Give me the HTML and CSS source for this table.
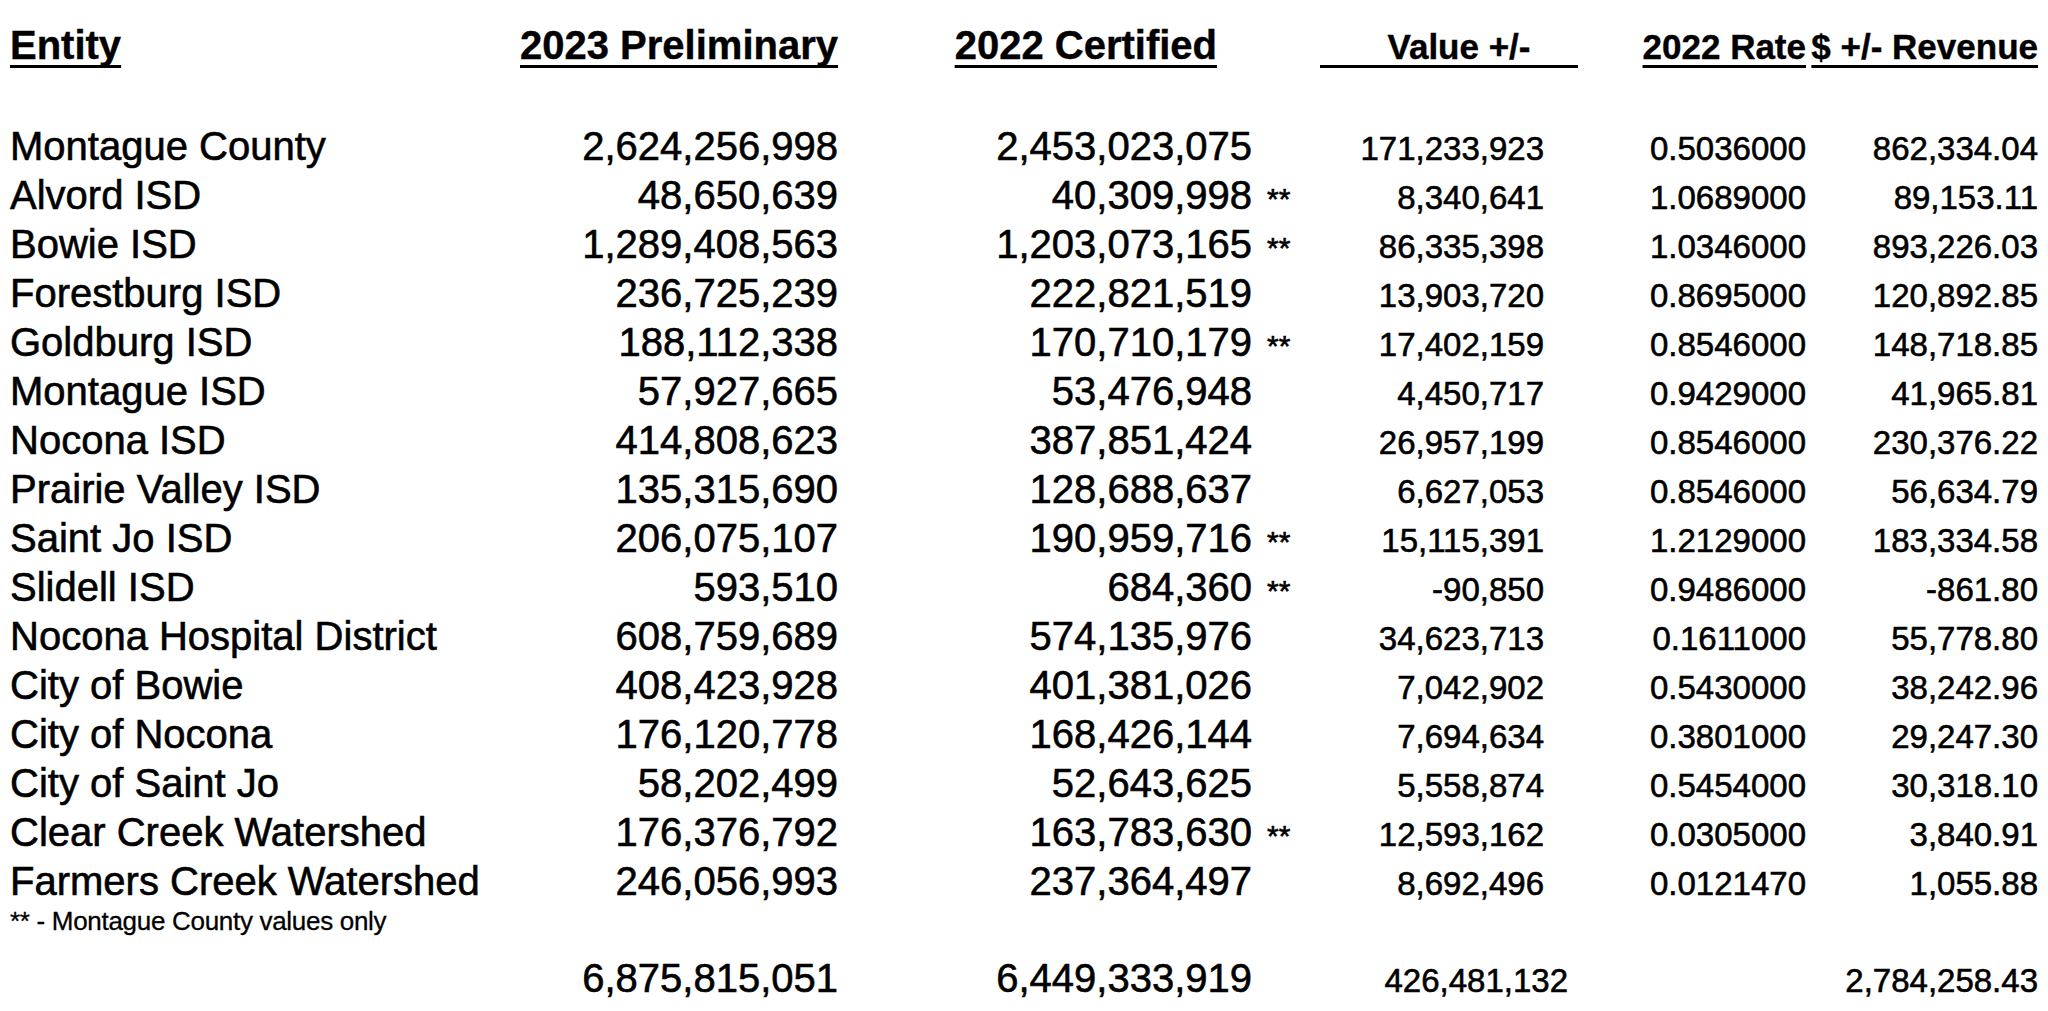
FILE: index.html
```html
<!DOCTYPE html>
<html lang="en">
<head>
    <meta charset="UTF-8">
    <title>Montague County Values</title>
    <link rel="stylesheet" href="styles.css">
</head>
<body>

<div class="sheet">
    <div class="row head">
        <div><span class="ul">Entity</span></div>
        <div class="num pad-pre"><span class="ul">2023 Preliminary</span></div>
        <div class="num pad-cert"><span class="ul">2022 Certified</span></div>
        <div></div>
        <div class="value-head"><span class="ul-box">Value +/-</span></div>
        <div class="num small"><span class="ul">2022 Rate</span></div>
        <div class="num small"><span class="ul">$ +/- Revenue</span></div>
    </div>

    <div class="rows" id="rows"></div>

    <div class="note">** - Montague County values only</div>

    <div class="row total">
        <div></div>
        <div class="num">6,875,815,051</div>
        <div class="num">6,449,333,919</div>
        <div></div>
        <div class="num small shift">426,481,132</div>
        <div class="num small"></div>
        <div class="num small">2,784,258.43</div>
    </div>
</div>

<script>
    // entity, 2023 preliminary, 2022 certified, county only, value +/-, rate, revenue
    const data = [
        ['Montague County', '2,624,256,998', '2,453,023,075', false, '171,233,923', '0.5036000', '862,334.04'],
        ['Alvord ISD', '48,650,639', '40,309,998', true, '8,340,641', '1.0689000', '89,153.11'],
        ['Bowie ISD', '1,289,408,563', '1,203,073,165', true, '86,335,398', '1.0346000', '893,226.03'],
        ['Forestburg ISD', '236,725,239', '222,821,519', false, '13,903,720', '0.8695000', '120,892.85'],
        ['Goldburg ISD', '188,112,338', '170,710,179', true, '17,402,159', '0.8546000', '148,718.85'],
        ['Montague ISD', '57,927,665', '53,476,948', false, '4,450,717', '0.9429000', '41,965.81'],
        ['Nocona ISD', '414,808,623', '387,851,424', false, '26,957,199', '0.8546000', '230,376.22'],
        ['Prairie Valley ISD', '135,315,690', '128,688,637', false, '6,627,053', '0.8546000', '56,634.79'],
        ['Saint Jo ISD', '206,075,107', '190,959,716', true, '15,115,391', '1.2129000', '183,334.58'],
        ['Slidell ISD', '593,510', '684,360', true, '-90,850', '0.9486000', '-861.80'],
        ['Nocona Hospital District', '608,759,689', '574,135,976', false, '34,623,713', '0.1611000', '55,778.80'],
        ['City of Bowie', '408,423,928', '401,381,026', false, '7,042,902', '0.5430000', '38,242.96'],
        ['City of Nocona', '176,120,778', '168,426,144', false, '7,694,634', '0.3801000', '29,247.30'],
        ['City of Saint Jo', '58,202,499', '52,643,625', false, '5,558,874', '0.5454000', '30,318.10'],
        ['Clear Creek Watershed', '176,376,792', '163,783,630', true, '12,593,162', '0.0305000', '3,840.91'],
        ['Farmers Creek Watershed', '246,056,993', '237,364,497', false, '8,692,496', '0.0121470', '1,055.88']
    ];

    const rows = document.getElementById('rows');

    data.forEach(d => {
        const row = document.createElement('div');
        row.className = 'row';
        row.innerHTML = `
            <div>${d[0]}</div>
            <div class="num">${d[1]}</div>
            <div class="num">${d[2]}</div>
            <div class="star">${d[3] ? '**' : ''}</div>
            <div class="num small">${d[4]}</div>
            <div class="num small">${d[5]}</div>
            <div class="num small">${d[6]}</div>
        `;
        rows.appendChild(row);
    });
</script>

</body>
</html>
```

FILE: styles.css
```css
body {
    margin: 0;
    background-color: #fff;
    color: #000;
    font-family: "Liberation Sans", Arial, sans-serif;
}
.sheet {
    padding: 21px 11px 0 10px;
}
.row {
    display: grid;
    grid-template-columns: 510px 318px 414px 68px 224px 262px 232px;
    align-items: baseline;
    height: 49px;
    font-size: 40px;
    line-height: 49px;
    white-space: nowrap;
    -webkit-text-stroke: 0.6px #000;
}
.num {
    text-align: right;
}
.small {
    font-size: 33px;
    line-height: 40px;
}
.star {
    font-size: 30px;
    line-height: 36px;
    padding-left: 15px;
}

/* header */
.head {
    font-weight: bold;
    margin-bottom: 52px;
    -webkit-text-stroke: 0.4px #000;
}
.head .small {
    font-size: 35px;
}
.pad-pre {
    padding-right: 8px;
}
.pad-cert {
    padding-right: 35px;
}
.ul {
    text-decoration: underline;
    text-decoration-thickness: 3px;
    text-underline-offset: 6px;
    text-decoration-skip-ink: none;
}
.value-head {
    width: 258px;
    text-align: center;
    font-size: 35px;
    line-height: 40px;
}
.ul-box {
    display: inline-block;
    width: 100%;
    line-height: 36px;
    padding-left: 20px;
    box-sizing: border-box;
    border-bottom: 3px solid #000;
}

/* footer */
.note {
    font-size: 26px;
    line-height: 30px;
    margin-bottom: 18px;
    letter-spacing: -0.3px;
    -webkit-text-stroke: 0.3px #000;
}
.shift {
    margin-right: -24px;
}
```
